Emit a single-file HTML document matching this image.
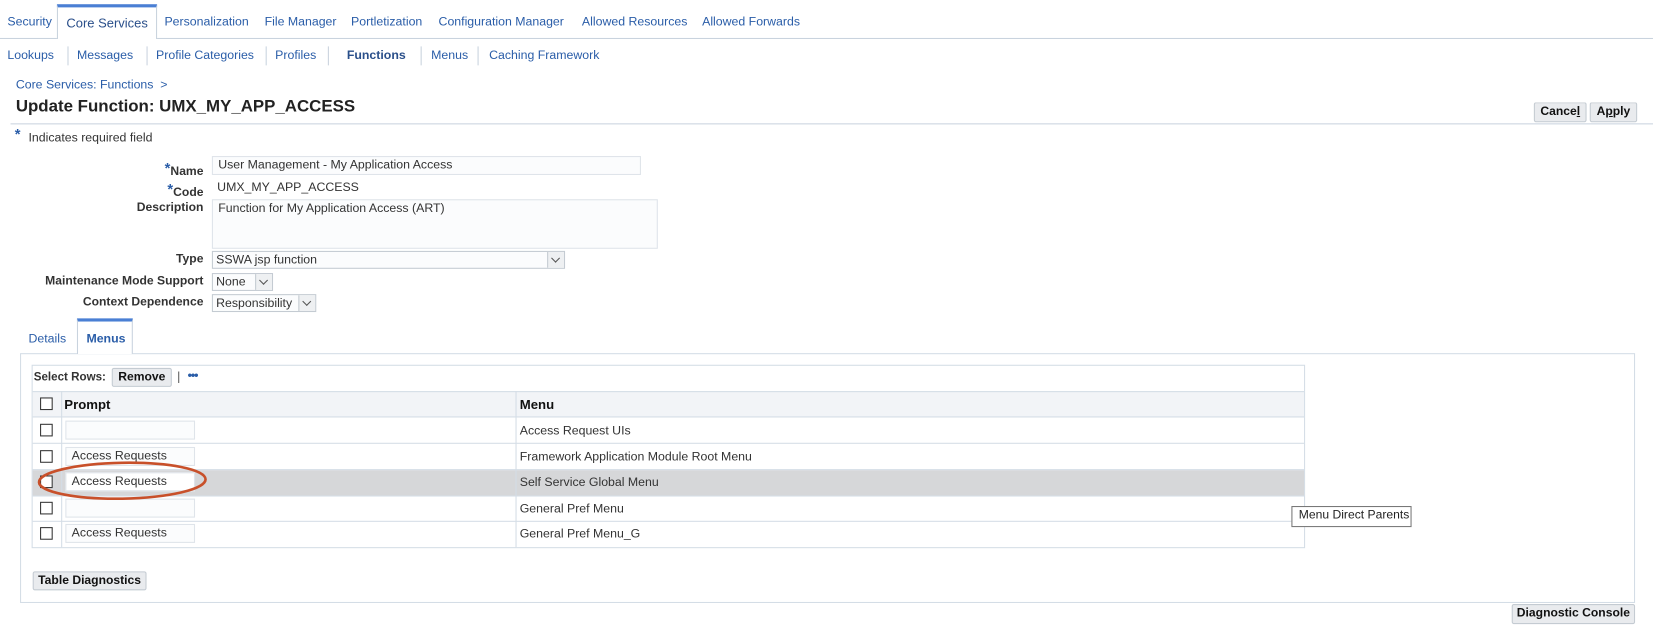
<!DOCTYPE html>
<html><head><meta charset="utf-8"><style>
*{box-sizing:border-box;margin:0;padding:0}
html,body{width:1653px;height:634px;overflow:hidden;background:#fff}
#w{position:absolute;left:0;top:0;width:1568px;height:602px;transform:scale(1.0542);transform-origin:0 0;font-family:"Liberation Sans",Arial,sans-serif;font-size:11.7px;color:#333}
.a{position:absolute;white-space:nowrap}
.lnk{color:#2a5da8}
.lbl{font-weight:bold;color:#333;text-align:right;font-size:11.5px}
.inp{position:absolute;border:1px solid #dfe4ea;background:#fbfcfd;color:#333;padding:1px 5px;font-size:11.7px;height:18px;line-height:14px}
.sel{position:absolute;border:1px solid #c4cbd2;background:#fbfcfd;height:17px;padding:1px 3px;line-height:13px;font-size:11.7px}
.sel i{position:absolute;right:0;top:0;width:16px;height:15px;border-left:1px solid #c4cbd2;background:#eef0f2}
.sel i:after{content:"";position:absolute;left:4px;top:3px;width:5px;height:5px;border-right:1px solid #555;border-bottom:1px solid #555;transform:rotate(45deg)}
.btn{position:absolute;border:1px solid #c4cbd2;background:#e9ebee;font-weight:bold;color:#111;text-align:center;border-radius:2px;line-height:16px;font-size:11.5px}
.cb{position:absolute;width:12px;height:12px;border:1px solid #333;background:#fff}
.hl{position:absolute;background:#c9d3de}
.sep{position:absolute;width:1px;height:18px;background:#c9d3de;top:44px}
</style></head><body><div id="w">
<div class="hl" style="left:0;top:36px;width:1568px;height:1px"></div>
<div class="a" style="left:54px;top:4px;width:95px;height:33px;background:#fff;border:1px solid #c9d3de;border-top:3px solid #4a7fd4;border-bottom:none"></div>
<div class="a lnk" style="left:7px;top:14px">Security</div>
<div class="a lnk" style="left:63px;top:15px;color:#2a4f8a;font-size:12.3px">Core Services</div>
<div class="a lnk" style="left:156px;top:14px">Personalization</div>
<div class="a lnk" style="left:251px;top:14px">File Manager</div>
<div class="a lnk" style="left:333px;top:14px">Portletization</div>
<div class="a lnk" style="left:416px;top:14px">Configuration Manager</div>
<div class="a lnk" style="left:552px;top:14px">Allowed Resources</div>
<div class="a lnk" style="left:666px;top:14px">Allowed Forwards</div>
<div class="a lnk" style="left:7px;top:46px">Lookups</div><div class="sep" style="left:64px"></div>
<div class="a lnk" style="left:73px;top:46px">Messages</div><div class="sep" style="left:139px"></div>
<div class="a lnk" style="left:148px;top:46px">Profile Categories</div><div class="sep" style="left:252px"></div>
<div class="a lnk" style="left:261px;top:46px">Profiles</div><div class="sep" style="left:311px"></div>
<div class="a" style="left:329px;top:46px;font-weight:bold;color:#2a4f8a">Functions</div><div class="sep" style="left:399px"></div>
<div class="a lnk" style="left:409px;top:46px">Menus</div><div class="sep" style="left:453px"></div>
<div class="a lnk" style="left:464px;top:46px">Caching Framework</div>
<div class="a lnk" style="left:15px;top:74px">Core Services: Functions &nbsp;&gt;</div>
<div class="a" style="left:15px;top:93px;font-size:16px;font-weight:bold;color:#222">Update Function: UMX_MY_APP_ACCESS</div>
<div class="hl" style="left:10px;top:117px;width:1628px;height:1px"></div>
<div class="btn" style="left:1455px;top:97px;width:50px;height:19px">Cance<u>l</u></div>
<div class="btn" style="left:1508px;top:97px;width:45px;height:19px">A<u>p</u>ply</div>
<div class="a" style="left:14px;top:119px;color:#2a5da8;font-size:14px;font-weight:bold">*</div>
<div class="a" style="left:27px;top:124px">Indicates required field</div>
<div class="a lbl" style="right:1375px;top:151px"><span style="color:#2a5da8;font-size:14px;vertical-align:2px">*</span>Name</div>
<div class="inp" style="left:201px;top:148px;width:407px">User Management - My Application Access</div>
<div class="a lbl" style="right:1375px;top:171px"><span style="color:#2a5da8;font-size:14px;vertical-align:2px">*</span>Code</div>
<div class="a" style="left:206px;top:171px">UMX_MY_APP_ACCESS</div>
<div class="a lbl" style="right:1375px;top:191px">Description</div>
<div class="inp" style="left:201px;top:189px;width:423px;height:47px">Function for My Application Access (ART)</div>
<div class="a lbl" style="right:1375px;top:240px">Type</div>
<div class="sel" style="left:201px;top:238px;width:335px">SSWA jsp function<i></i></div>
<div class="a lbl" style="right:1375px;top:261px">Maintenance Mode Support</div>
<div class="sel" style="left:201px;top:259px;width:58px">None<i></i></div>
<div class="a lbl" style="right:1375px;top:281px">Context Dependence</div>
<div class="sel" style="left:201px;top:279px;width:99px;overflow:hidden">Responsibility<i></i></div>
<div class="a lnk" style="left:27px;top:315px">Details</div>
<div class="a" style="left:73px;top:302px;width:53px;height:34px;background:#fff;border:1px solid #c9d3de;border-top:3px solid #4a7fd4;border-bottom:none;z-index:2"></div>
<div class="a" style="left:82px;top:315px;font-weight:bold;color:#2a5da8;z-index:3">Menus</div>
<div class="a" style="left:19px;top:335px;width:1532px;height:237px;border:1px solid #d4dde6"></div>
<div class="a" style="left:30px;top:346px;width:1208px;height:174px;border:1px solid #d4dde6"></div>
<div class="a" style="left:32px;top:352px;font-weight:bold;color:#333;font-size:11px">Select Rows:</div>
<div class="btn" style="left:106px;top:349px;width:57px;height:18px">Remove</div>
<div class="a" style="left:168px;top:351px;color:#555">|</div>
<div class="a" style="left:178px;top:350px;color:#2a5da8;font-weight:bold;letter-spacing:-1px">•••</div>
<div class="a" style="left:31px;top:371px;width:1206px;height:25px;background:#f2f4f7;border-top:1px solid #d4dde6;border-bottom:1px solid #d4dde6"></div>
<div class="cb" style="left:38px;top:377px"></div>
<div class="a" style="left:61px;top:377px;font-weight:bold;font-size:12.5px;color:#111">Prompt</div>
<div class="a" style="left:493px;top:377px;font-weight:bold;font-size:12.5px;color:#111">Menu</div>
<div class="a" style="left:31px;top:446px;width:1206px;height:24px;background:#d6d7d9"></div>
<div class="hl" style="left:31px;top:420px;width:1206px;height:1px;background:#d4dde6"></div>
<div class="hl" style="left:31px;top:445px;width:1206px;height:1px;background:#d4dde6"></div>
<div class="hl" style="left:31px;top:470px;width:1206px;height:1px;background:#d4dde6"></div>
<div class="hl" style="left:31px;top:494px;width:1206px;height:1px;background:#d4dde6"></div>
<div class="hl" style="left:58px;top:371px;width:1px;height:148px;background:#d4dde6"></div>
<div class="hl" style="left:489px;top:371px;width:1px;height:148px;background:#d4dde6"></div>
<div class="cb" style="left:38px;top:402px"></div><div class="inp" style="left:62px;top:399px;width:123px"></div><div class="a" style="left:493px;top:402px">Access Request UIs</div>
<div class="cb" style="left:38px;top:427px"></div><div class="inp" style="left:62px;top:424px;width:123px">Access Requests</div><div class="a" style="left:493px;top:427px">Framework Application Module Root Menu</div>
<div class="cb" style="left:38px;top:451px"></div><div class="inp" style="left:62px;top:448px;width:123px;background:#fff">Access Requests</div><div class="a" style="left:493px;top:451px">Self Service Global Menu</div>
<div class="cb" style="left:38px;top:476px"></div><div class="inp" style="left:62px;top:473px;width:123px"></div><div class="a" style="left:493px;top:476px">General Pref Menu</div>
<div class="cb" style="left:38px;top:500px"></div><div class="inp" style="left:62px;top:497px;width:123px">Access Requests</div><div class="a" style="left:493px;top:500px">General Pref Menu_G</div>
<svg class="a" style="left:0;top:0;z-index:5" width="300" height="600"><ellipse cx="116" cy="456" rx="79" ry="17" fill="none" stroke="#c8502a" stroke-width="2.5" transform="rotate(-1 116 456)"/></svg>
<div class="btn" style="left:31px;top:542px;width:108px;height:18px">Table Diagnostics</div>
<div class="a" style="left:1225px;top:480px;width:114px;height:20px;border:1px solid #777;background:#fff;color:#222;padding:2px 6px;font-size:11.5px">Menu Direct Parents</div>
<div class="btn" style="left:1434px;top:573px;width:117px;height:19px">Diagnostic Console</div>
</div></body></html>
